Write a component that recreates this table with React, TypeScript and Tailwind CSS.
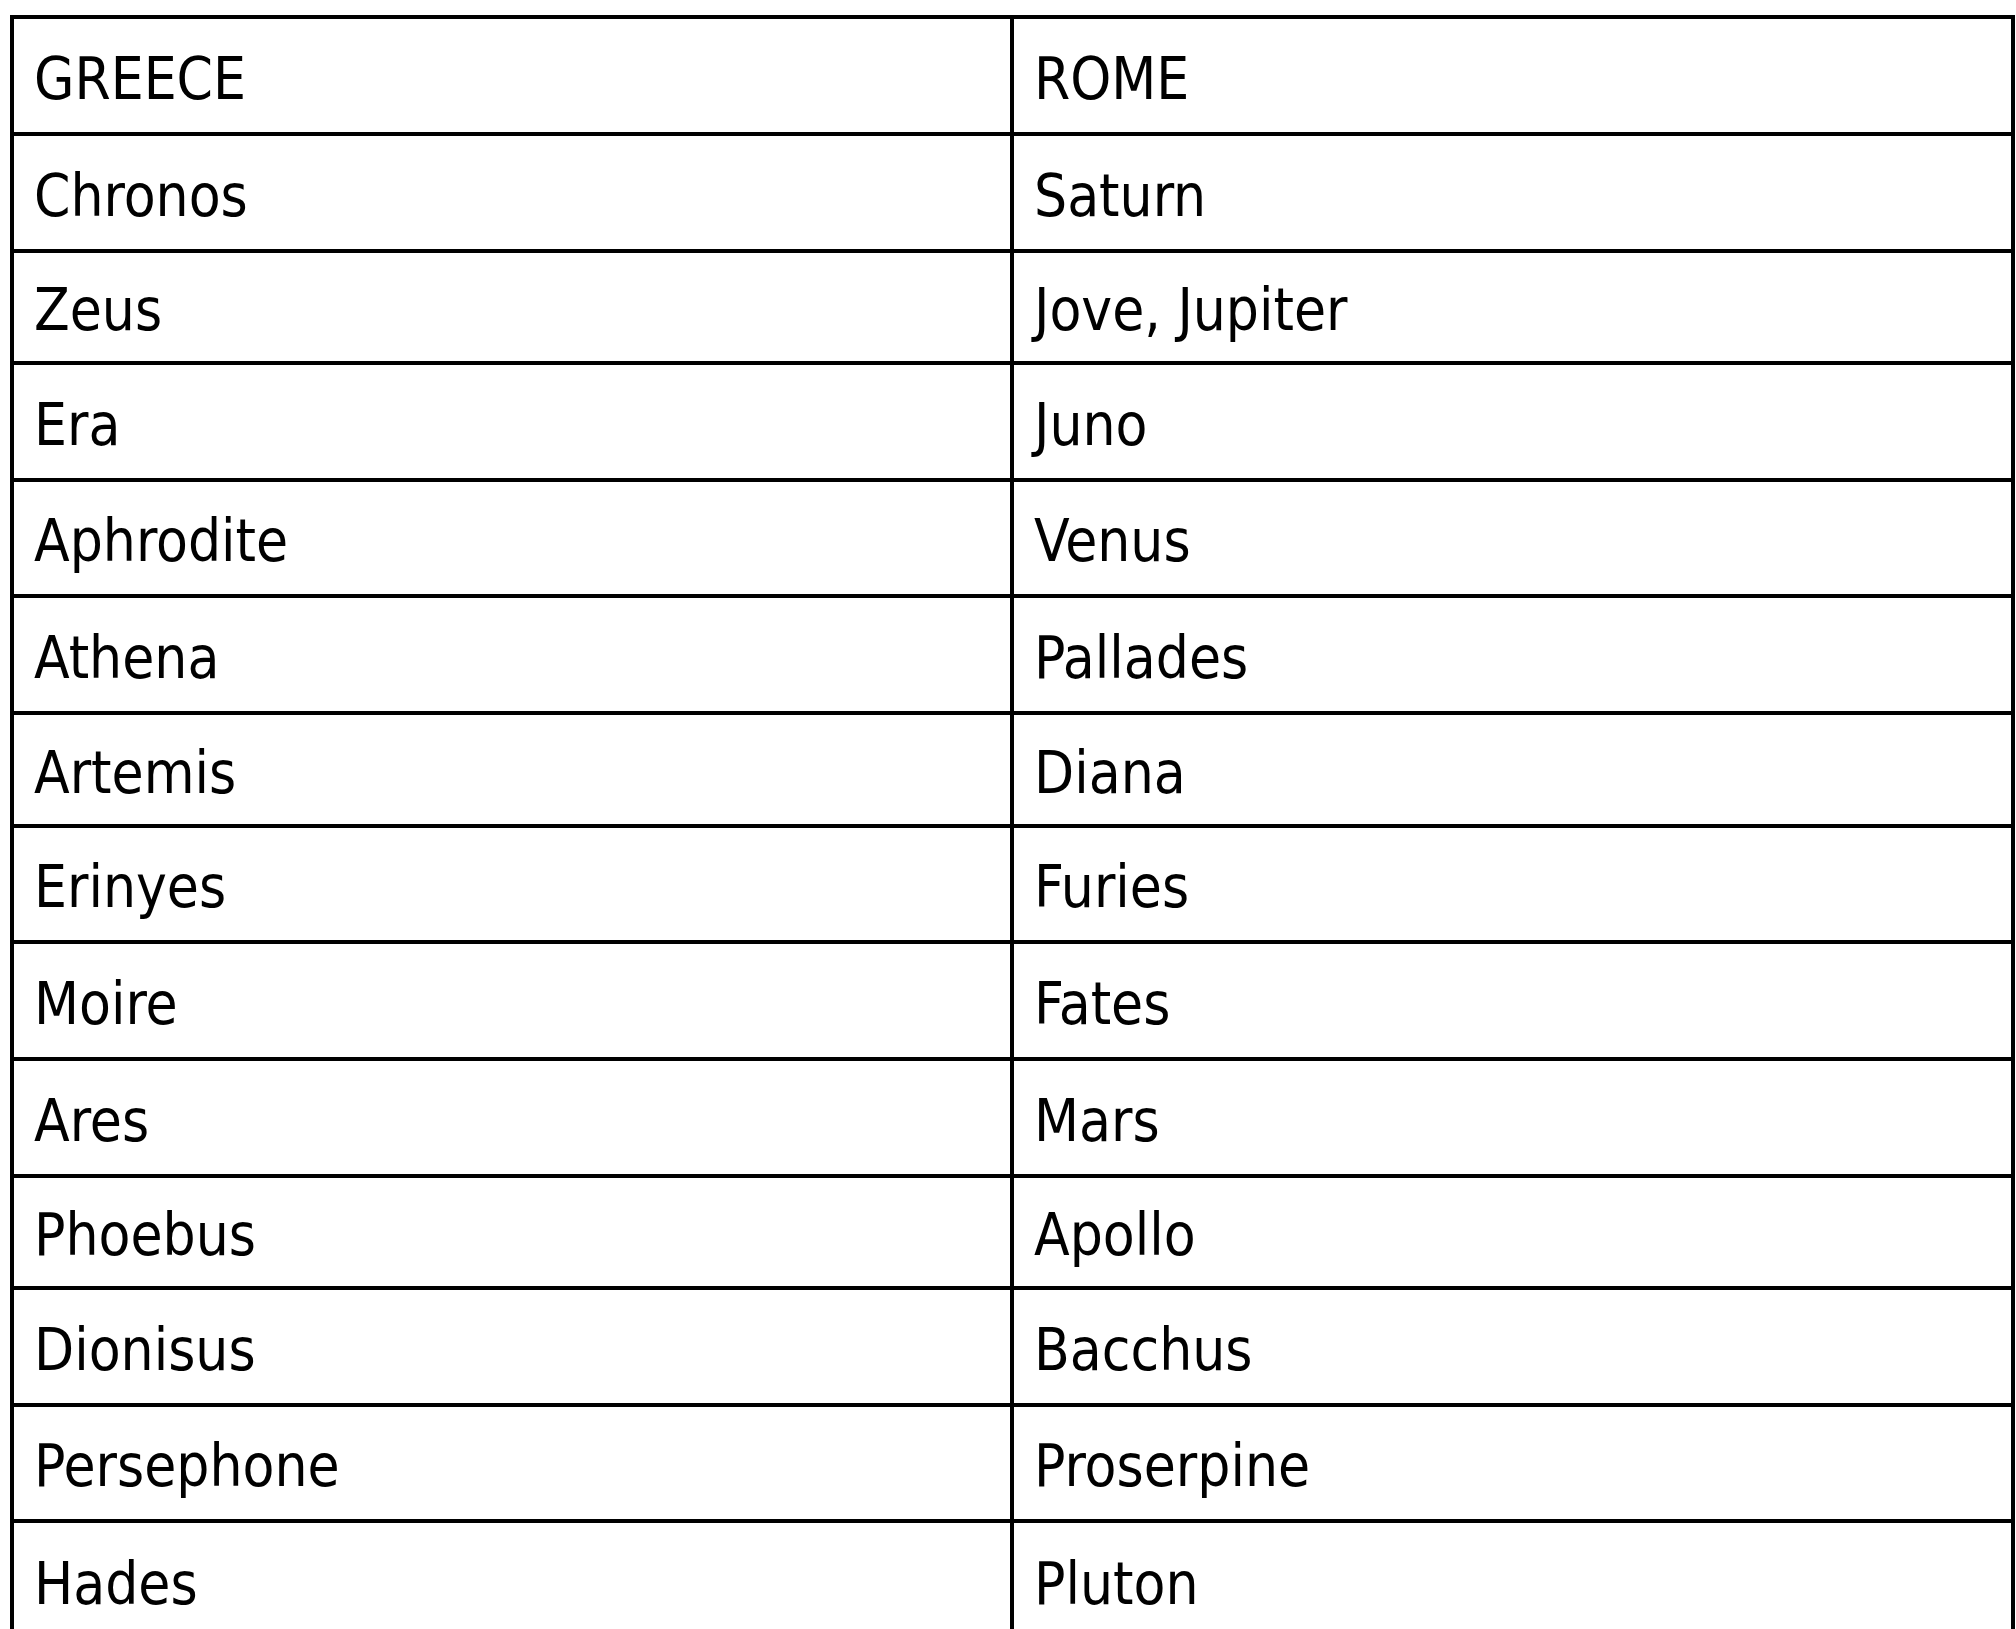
const rows: [string, string, number][] = [
  ["GREECE", "ROME", 113],
  ["Chronos", "Saturn", 113],
  ["Zeus", "Jove, Jupiter", 108],
  ["Era", "Juno", 113],
  ["Aphrodite", "Venus", 112],
  ["Athena", "Pallades", 113],
  ["Artemis", "Diana", 109],
  ["Erinyes", "Furies", 112],
  ["Moire", "Fates", 113],
  ["Ares", "Mars", 113],
  ["Phoebus", "Apollo", 108],
  ["Dionisus", "Bacchus", 113],
  ["Persephone", "Proserpine", 112],
  ["Hades", "Pluton", 116],
];

export default function App() {
  return (
    <div className="h-[1629px] w-[2016px] overflow-hidden bg-white pl-[10px] pt-[15px]">
      <div
        className="w-[2005px] border-x-4 border-t-4 border-black text-[58px] leading-none text-black"
        style={{ fontFamily: '"DejaVu Sans Condensed", "DejaVu Sans", sans-serif', fontStretch: "condensed" }}
      >
        {rows.map(([greek, roman, h], i) => (
          <div
            key={greek}
            className={i < rows.length - 1 ? "flex border-b-4 border-black" : "flex"}
            style={{ height: h + (i < rows.length - 1 ? 4 : 0) }}
          >
            <div className="flex w-[1000px] items-center border-r-4 border-black pt-[6px] pl-[20px]">
              {greek}
            </div>
            <div className="flex flex-1 items-center pt-[6px] pl-[20px]">{roman}</div>
          </div>
        ))}
      </div>
    </div>
  );
}
